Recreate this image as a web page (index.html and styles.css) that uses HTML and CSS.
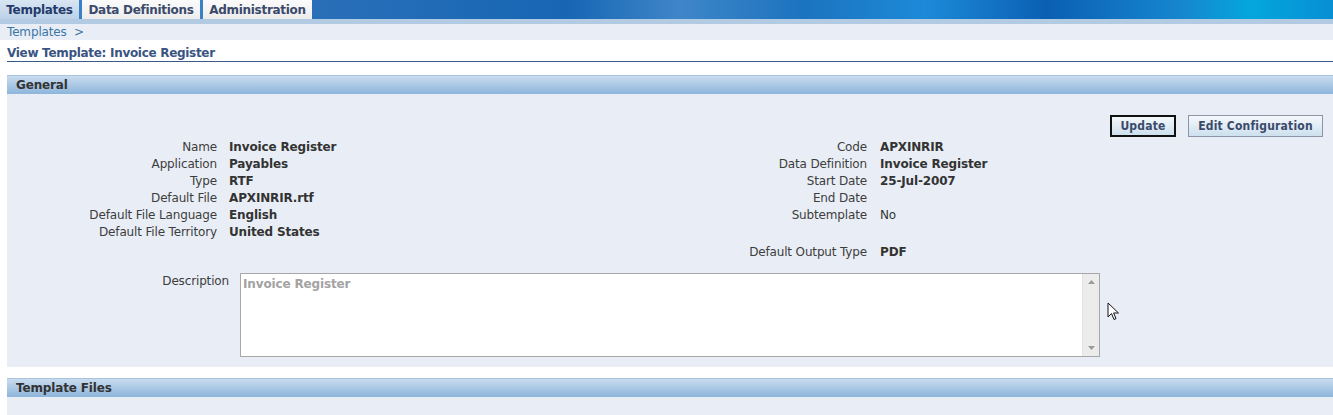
FILE: index.html
```html
<!DOCTYPE html>
<html lang="en">
<head>
  <meta charset="UTF-8">
  <title>View Template: Invoice Register</title>
  <link rel="stylesheet" href="styles.css">
</head>
<body>
  <!-- tab bar -->
  <div class="tabbar">
    <a class="tab active">Templates</a>
    <a class="tab">Data Definitions</a>
    <a class="tab">Administration</a>
    <div class="banner"></div>
  </div>
  <div class="strip"></div>
  <div class="crumbs"><a>Templates</a>&nbsp; &gt;</div>

  <main>
    <h1 class="page-title">View Template: Invoice Register</h1>

    <section class="box">
      <h2 class="box-head">General</h2>
      <div class="box-body">
        <div class="actions">
          <button class="btn default">Update</button>
          <button class="btn wide">Edit Configuration</button>
        </div>

        <div class="cols">
          <dl class="props left">
            <dt>Name</dt><dd>Invoice Register</dd>
            <dt>Application</dt><dd>Payables</dd>
            <dt>Type</dt><dd>RTF</dd>
            <dt>Default File</dt><dd>APXINRIR.rtf</dd>
            <dt>Default File Language</dt><dd>English</dd>
            <dt>Default File Territory</dt><dd>United States</dd>
          </dl>
          <dl class="props right">
            <dt>Code</dt><dd>APXINRIR</dd>
            <dt>Data Definition</dt><dd>Invoice Register</dd>
            <dt>Start Date</dt><dd>25-Jul-2007</dd>
            <dt>End Date</dt><dd></dd>
            <dt>Subtemplate</dt><dd class="plain">No</dd>
            <dt class="gap">Default Output Type</dt><dd class="gap">PDF</dd>
          </dl>
        </div>

        <div class="desc">
          <span class="desc-label">Description</span>
          <div class="textarea">
            <div class="ta-text">Invoice Register</div>
            <div class="ta-scroll">
              <svg width="7" height="4" viewBox="0 0 7 4"><path d="M0 4 L3.5 0 L7 4 Z" fill="#9a9a9a"/></svg>
              <svg width="7" height="4" viewBox="0 0 7 4"><path d="M0 0 L3.5 4 L7 0 Z" fill="#9a9a9a"/></svg>
            </div>
          </div>
        </div>

        <!-- mouse pointer in the shot -->
        <svg class="pointer" width="13" height="20" viewBox="0 0 13 20">
          <path d="M1 1 L1 15 L4.5 11.5 L7 17.5 L9 16.6 L6.6 11 L11.5 11 Z" fill="#fff" stroke="#111" stroke-width="1" stroke-linejoin="round"/>
        </svg>
      </div>
    </section>

    <section class="box">
      <h2 class="box-head">Template Files</h2>
      <div class="box-body short"></div>
    </section>
  </main>
</body>
</html>
```

FILE: styles.css
```css
/* ——— base ——— */
:root {
  --fg: #333;
  --link: #3b76a6;
  --title: #3a5482;
  --pale: #e9eef6;
  --label: #3d3d3d;
}
body {
  margin: 0;
  font-family: "DejaVu Sans", sans-serif;
  font-size: 12px;
  letter-spacing: -0.15px;
  color: var(--fg);
  background: #fff;
}

/* ——— tabs ——— */
.tabbar {
  display: flex;
  height: 19px;
  background: #1b6cb9;
}
.tab {
  display: flex; align-items: center; justify-content: center;
  font-size: 12px; font-weight: bold;
  letter-spacing: -0.3px;
  color: #3b4a6b;
  background: linear-gradient(#fbfbfb, #ececec);
  border-right: 3px solid #3a80c6;
  white-space: nowrap;
}
.tab:nth-child(1) { width: 79px; color: #243a6a; background: linear-gradient(#d8e5f2, #bcd2e9); }
.tab:nth-child(2) { width: 118px; }
.tab:nth-child(3) { width: 109px; border-right: none; }
.banner {
  flex: 1;
  background: linear-gradient(90deg, #2a6fb8 0%, #1766b4 25%, #3f86c8 36%, #1c73bf 48%, #1c8ad8 60%, #0b5fb3 72%, #1686cf 85%, #04a6dd 92%, #078fd4 100%);
}
.strip { height: 5px; background: #b2cbe3; }
.crumbs {
  height: 16px; line-height: 16px;
  padding-left: 7px;
  background: var(--pale);
  color: var(--link);
}

/* ——— page ——— */
main { padding-left: 7px; }
.page-title {
  margin: 0;
  padding-top: 6px;
  height: 15px; line-height: 15px;
  font-size: 12px; font-weight: bold;
  letter-spacing: -0.3px;
  color: var(--title);
  border-bottom: 1px solid #3b5a86;
}

.box { margin-top: 13px; }
.box + .box { margin-top: 11px; }
.box-head {
  margin: 0;
  height: 18px; line-height: 18px;
  padding-left: 9px;
  font-size: 12px; font-weight: bold;
  color: #333;
  border-top: 1px solid #a9c4df;
  background: linear-gradient(#c9dcef, #8db5db);
}
.box-body {
  position: relative;
  background: var(--pale);
  height: 273px;
}
.box-body.short { height: 20px; }

.actions {
  display: flex; justify-content: flex-end; gap: 12px;
  padding: 21px 10px 0 0;
}
.btn {
  font-family: "DejaVu Sans Condensed", "DejaVu Sans", sans-serif;
  font-stretch: condensed;
  font-size: 12px; font-weight: bold;
  letter-spacing: 0.2px;
  color: #3b4a6b;
  height: 22px;
  padding: 0;
  background: linear-gradient(#f4f8fb, #cde0ee);
  border: 1px solid #8c94a8;
  border-radius: 0;
}
.btn.default { border: 2px solid #111; width: 66px; }
.btn.wide { width: 135px; }

.cols {
  display: grid;
  grid-template-columns: 650px 1fr;
  margin-top: 2px;
}
.props {
  display: grid;
  grid-template-columns: 210px auto;
  column-gap: 12px;
  margin: 0;
  line-height: 17px;
  align-content: start;
}
.props.right { column-gap: 13px; }
.props dt { text-align: right; color: var(--label); }
.props dd { margin: 0; font-weight: bold; min-height: 17px; color: #333; }
.props dd.plain { font-weight: normal; }
.props .gap { margin-top: 20px; }

.desc {
  display: flex; align-items: flex-start; gap: 11px;
  margin-top: 12px;
}
.desc-label { width: 222px; text-align: right; padding-top: 1px; color: var(--label); }
.textarea {
  display: flex;
  width: 858px; height: 82px;
  background: #fff;
  border: 1px solid #a8a8a8;
}
.ta-text {
  flex: 1;
  padding: 3px 0 0 2px;
  font-weight: bold;
  color: #a3a3a3;
}
.ta-scroll {
  width: 16px;
  background: #ececec;
  border-left: 1px solid #e2e2e2;
  display: flex; flex-direction: column; justify-content: space-between; align-items: center;
  padding: 6px 0 6px;
}
.pointer { position: absolute; left: 1100px; top: 208px; }
```
